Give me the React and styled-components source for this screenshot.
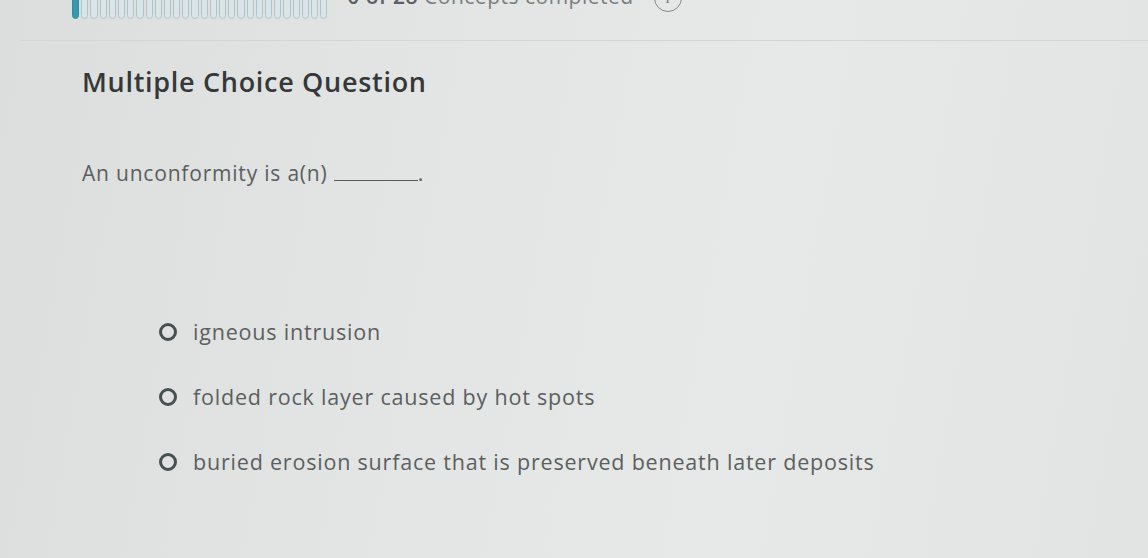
import React from 'react';
import styled, { createGlobalStyle } from 'styled-components';

const GlobalStyle = createGlobalStyle`
  html, body {
    margin: 0;
    padding: 0;
  }
  body {
    width: 1148px;
    height: 558px;
    overflow: hidden;
    background: linear-gradient(100deg, #dcdedd 0%, #e3e5e4 35%, #e7e9e8 65%, #e2e4e3 100%);
    font-family: "Open Sans", Lato, "Liberation Sans", sans-serif;
  }
`;

const TOTAL_CONCEPTS = 28;
const DONE = 0;

const options = [
  'igneous intrusion',
  'folded rock layer caused by hot spots',
  'buried erosion surface that is preserved beneath later deposits',
];

const Page = () => {
  const segments = [];
  for (let i = 0; i < TOTAL_CONCEPTS; i++) {
    segments.push(<Segment key={i} filled={i === DONE} />);
  }

  return (
    <>
      <GlobalStyle />
      <Header>
        <Progress>{segments}</Progress>
        <Status>
          <b>{DONE} of {TOTAL_CONCEPTS}</b> Concepts completed
        </Status>
        <InfoBadge>i</InfoBadge>
      </Header>
      <Divider />
      <Main>
        <Title>Multiple Choice Question</Title>
        <Prompt>
          An unconformity is a(n) <Blank />.
        </Prompt>
        <Choices>
          {options.map((text) => (
            <Choice key={text}>
              <Radio />
              <ChoiceText>{text}</ChoiceText>
            </Choice>
          ))}
        </Choices>
      </Main>
    </>
  );
};

export default Page;

// header sits partly above the top edge, the way the page is scrolled
const Header = styled.div`
  display: flex;
  align-items: flex-start;
  height: 60px;
  margin-top: -20px;
  padding-left: 72px;
  box-sizing: border-box;
`;

const Progress = styled.div`
  display: flex;
  gap: 2px;
  height: 39px;
`;

const Segment = styled.div`
  width: 7.2px;
  height: 100%;
  box-sizing: border-box;
  border: 1px solid ${(p) => (p.filled ? '#2f8ea3' : '#a9c6cd')};
  border-radius: 0 0 4px 4px;
  background: ${(p) => (p.filled ? '#3b97ab' : '#dbe5e7')};
`;

const Status = styled.div`
  margin-left: 20px;
  margin-top: 4px;
  font-size: 21px;
  line-height: 24px;
  color: #7a7e7e;
  letter-spacing: 0.5px;

  b {
    font-weight: 600;
    color: #5b5f5f;
  }
`;

const InfoBadge = styled.div`
  margin-left: 20px;
  margin-top: 4px;
  width: 28px;
  height: 28px;
  border-radius: 50%;
  border: 1.5px solid #7f8a8c;
  box-sizing: border-box;
  display: flex;
  align-items: center;
  justify-content: center;
  font-family: "Liberation Serif", serif;
  font-size: 15px;
  color: #6b7576;
`;

const Divider = styled.div`
  margin-left: 20px;
  height: 1px;
  background: #d3d6d5;
`;

const Main = styled.div`
  padding: 23px 0 0 82px;
`;

const Title = styled.h1`
  margin: 0;
  font-size: 27px;
  line-height: 36px;
  font-weight: 600;
  color: #353839;
  letter-spacing: 0.7px;
`;

const Prompt = styled.p`
  margin: 60px 0 0;
  font-size: 21px;
  line-height: 26px;
  color: #5a5e5f;
  letter-spacing: 0.8px;
`;

const Blank = styled.span`
  display: inline-block;
  width: 84px;
  border-bottom: 1px solid #555a5b;
  vertical-align: baseline;
`;

const Choices = styled.div`
  display: flex;
  flex-direction: column;
  gap: 39px;
  margin-top: 133px;
  padding-left: 77px;
`;

const Choice = styled.label`
  display: flex;
  align-items: center;
  gap: 16px;
  height: 26px;
`;

const Radio = styled.span`
  width: 18px;
  height: 18px;
  box-sizing: border-box;
  border: 3px solid #474f50;
  border-radius: 50%;
  flex-shrink: 0;
`;

const ChoiceText = styled.span`
  font-size: 21.5px;
  line-height: 26px;
  color: #5b5f60;
  letter-spacing: 0.8px;
`;
